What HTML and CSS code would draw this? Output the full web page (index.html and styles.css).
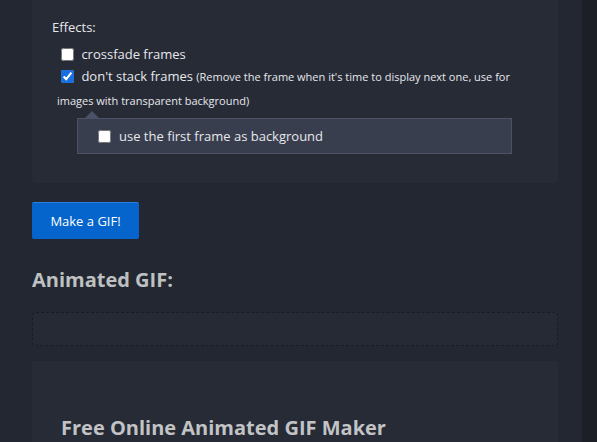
FILE: index.html
```html
<!DOCTYPE html>
<html>
<head>
  <title>Animated GIF Maker</title>
  <link rel="stylesheet" href="styles.css">
</head>
<body>
  <div class="page">
    <div class="main">
      <div class="panel">
        <div class="field-title">Effects:</div>
        <div class="options">
          <div class="option">
            <input type="checkbox" id="crossfade">
            <label for="crossfade">crossfade frames</label>
          </div>
          <div class="option">
            <input type="checkbox" id="dontstack" checked>
            <label for="dontstack">don't stack frames</label>
            <small>(Remove the frame when it's time to display next one, use for images with transparent background)</small>
          </div>
        </div>
        <div class="sub-option">
          <input type="checkbox" id="firstframe">
          <label for="firstframe">use the first frame as background</label>
        </div>
      </div>

      <button class="make-btn">Make a GIF!</button>

      <h2>Animated GIF:</h2>
      <div class="output-box"></div>

      <div class="panel about">
        <h1>Free Online Animated GIF Maker</h1>
      </div>
    </div>
    <div class="side"></div>
  </div>
</body>
</html>
```

FILE: styles.css
```css
body {
  margin: 0;
  background: #222731;
  font-family: "Open Sans", Arial, sans-serif;
  font-size: 13px;
  color: #e6e8ec;
  overflow: hidden;
}
.page {
  display: flex;
  height: 442px;
}
.main {
  width: 526px;
  padding: 0 24px 0 32px;
}
.side {
  flex: 1;
  background: #1c1f26;
}
.panel {
  background: #262b36;
  border-radius: 0 0 4px 4px;
  padding: 18px 20px 29px 20px;
}
.field-title {
  line-height: 18px;
  margin-bottom: 7px;
}
.options {
  padding-left: 5px;
  line-height: 22px;
}
.option input {
  width: 13px;
  height: 13px;
  margin: 0 4px 0 4px;
  vertical-align: -2px;
  accent-color: #1a6fe0;
}
.option small {
  font-size: 11px;
  line-height: 24px;
}
.sub-option {
  position: relative;
  margin: 5px 0 0 25px;
  width: 413px;
  height: 34px;
  padding-left: 20px;
  background: #393e4e;
  border: 1px solid #4b5166;
  display: flex;
  align-items: center;
  gap: 8px;
}
.sub-option::before {
  content: "";
  position: absolute;
  left: 7px;
  top: -8px;
  border-left: 7px solid transparent;
  border-right: 7px solid transparent;
  border-bottom: 7px solid #4b5166;
}
.sub-option input {
  width: 13px;
  height: 13px;
  margin: 0;
}
.make-btn {
  margin-top: 19px;
  width: 107px;
  height: 37px;
  background: #0565cc;
  border: none;
  border-top: 1px solid #2a7fe0;
  border-radius: 2px;
  color: #fff;
  font-family: "Open Sans", Arial, sans-serif;
  font-size: 13px;
  cursor: pointer;
}
h2 {
  margin: 27px 0 0 0;
  font-size: 20px;
  line-height: 28px;
  font-weight: bold;
  color: #bfc0c2;
}
.output-box {
  margin-top: 18px;
  height: 32px;
  background: #252a34;
  border: 1px dashed #191c22;
  border-radius: 4px;
}
.about {
  margin-top: 15px;
  border-radius: 0;
  padding: 53px 29px 20px 29px;
}
h1 {
  margin: 0;
  font-size: 20px;
  line-height: 28px;
  font-weight: bold;
  color: #c2c3c5;
}
```
